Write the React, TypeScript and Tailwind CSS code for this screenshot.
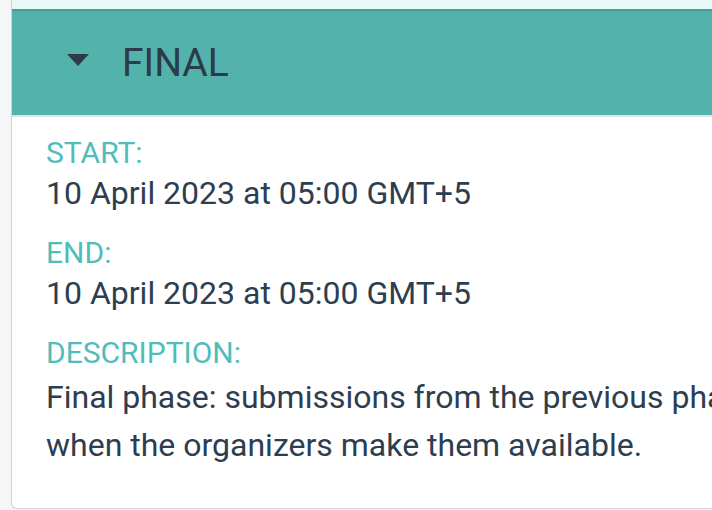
import React from 'react'

const phase = {
  name: 'FINAL',
  start: '10 April 2023 at 05:00 GMT+5',
  end: '10 April 2023 at 05:00 GMT+5',
  description: [
    'Final phase: submissions from the previous phase are automatically migrated,',
    'when the organizers make them available.',
  ],
}

function Field({ label, children, last }: { label: string; children: React.ReactNode; last?: boolean }) {
  return (
    <div className={last ? '' : 'mb-5'}>
      <div className="text-[30px] leading-[40px] text-[#4fbdba] uppercase">{label}:</div>
      {children}
    </div>
  )
}

export default function App() {
  return (
    <div
      className="w-[712px] h-[510px] overflow-hidden bg-[#f5f6f8] pl-[11px]"
      style={{ fontFamily: 'Roboto, "Noto Sans", sans-serif' }}
    >
      <div className="w-[1000px] h-[509px] bg-white border-l border-b border-[#cfd1d6] rounded-bl-md flex flex-col">
        {/* previous item edge */}
        <div className="h-[9px] bg-[#e7f9f9]" />

        {/* header */}
        <div className="h-[108px] bg-[#53b3ac] border-t-2 border-[#4a9c96] border-b-2 border-b-[#e2e2e2] flex items-center pl-[55px]">
          <svg width="22" height="12" viewBox="0 0 22 12" className="mr-[33px] -mt-[6px]">
            <path d="M0 0 H22 L11 12 Z" fill="#2d3a47" />
          </svg>
          <span className="text-[39px] leading-none text-[#2d3a47]">{phase.name}</span>
        </div>

        {/* details */}
        <div className="pt-4 pl-[34px] text-[#2c3e50]">
          <Field label="Start">
            <div className="text-[32px] leading-[40px]">{phase.start}</div>
          </Field>
          <Field label="End">
            <div className="text-[32px] leading-[40px]">{phase.end}</div>
          </Field>
          <Field label="Description" last>
            {phase.description.map((line) => (
              <div key={line} className="text-[32px] leading-[48px] whitespace-nowrap">
                {line}
              </div>
            ))}
          </Field>
        </div>
      </div>
    </div>
  )
}
